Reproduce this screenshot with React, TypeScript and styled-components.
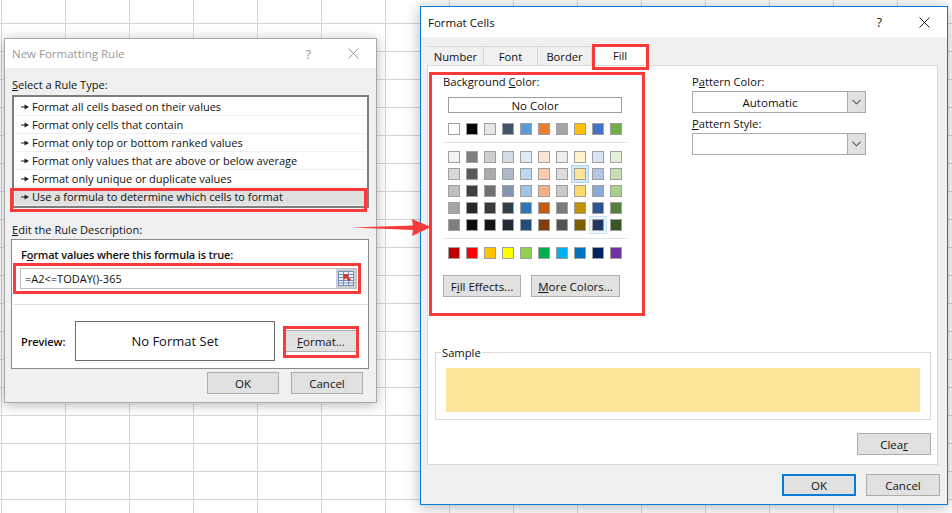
import styled, { createGlobalStyle } from "styled-components";

const themeRow = ["#ffffff", "#000000", "#e7e6e6", "#44546a", "#5b9bd5", "#ed7d31", "#a5a5a5", "#ffc000", "#4472c4", "#70ad47"];
const tintRows = [
  "#f2f2f2 #7f7f7f #d0cece #d6dce4 #deeaf6 #fbe5d5 #ededed #fff2cc #d9e2f3 #e2efd9",
  "#d8d8d8 #595959 #aeabab #adb9ca #bdd7ee #f7cbac #dbdbdb #ffe599 #b4c6e7 #c5e0b3",
  "#bfbfbf #3f3f3f #757070 #8496b0 #9dc3e6 #f4b183 #c9c9c9 #ffd966 #8eaadb #a8d08d",
  "#a5a5a5 #262626 #3a3838 #323f4f #2e75b5 #c55a11 #7b7b7b #bf9000 #2f5496 #538135",
  "#7f7f7f #0c0c0c #171616 #222a35 #1e4e79 #833c0b #525252 #7f6000 #1f3864 #375623",
].join(" ").split(" ");
const standardRow = ["#c00000", "#ff0000", "#ffc000", "#ffff00", "#92d050", "#00b050", "#00b0f0", "#0070c0", "#002060", "#7030a0"];

const rules = [
  "Format all cells based on their values",
  "Format only cells that contain",
  "Format only top or bottom ranked values",
  "Format only values that are above or below average",
  "Format only unique or duplicate values",
  "Use a formula to determine which cells to format",
];

function CloseIcon({ color }: { color: string }) {
  return (
    <svg width="11" height="11" viewBox="0 0 11 11">
      <path d="M0.5 0.5L10.5 10.5M10.5 0.5L0.5 10.5" stroke={color} strokeWidth="1" fill="none" />
    </svg>
  );
}

function Chevron() {
  return (
    <svg width="9" height="6" viewBox="0 0 9 6">
      <path d="M0.5 0.8L4.5 4.8L8.5 0.8" stroke="#555" strokeWidth="1.1" fill="none" />
    </svg>
  );
}

function RuleBullet() {
  return (
    <svg width="8" height="6" viewBox="0 0 8 6">
      <path d="M0 2.4H3.5V0.5L8 3L3.5 5.5V3.6H0Z" fill="#222" />
    </svg>
  );
}

function RangeIcon() {
  return (
    <svg width="16" height="15" viewBox="0 0 16 15">
      <rect x="0.5" y="0.5" width="15" height="14" fill="#eef3fa" stroke="#6f90c2" />
      <path d="M0.5 3.5H15.5M0.5 6.5H15.5M0.5 9.5H15.5M0.5 12H15.5M5.5 0.5V14.5M10.5 0.5V14.5" stroke="#6f90c2" strokeWidth="1" fill="none" />
      <path d="M5 3L11 3.5L9.6 5.4L13 8.5L11 10.5L8 7L6.2 8.8Z" fill="#d9342b" />
    </svg>
  );
}

function App() {
  return (
    <>
      <GlobalStyle />
      <Canvas>
        <LeftDialog>
          <TitleBar $height={29}>
            <TitleText $muted>New Formatting Rule</TitleText>
            <TitleButtons>
              <HelpMark $muted>?</HelpMark>
              <CloseIcon color="#999" />
            </TitleButtons>
          </TitleBar>
          <LeftBody>
            <SectionLabel>
              <u>S</u>elect a Rule Type:
            </SectionLabel>
            <RuleList>
              {rules.map((rule, i) => (
                <RuleRow key={rule} $selected={i === 5}>
                  <RuleBullet />
                  {rule}
                </RuleRow>
              ))}
            </RuleList>
            <EditLabel>
              <u>E</u>dit the Rule Description:
            </EditLabel>
            <EditBox>
              <BoldLabel>
                F<u>o</u>rmat values where this formula is true:
              </BoldLabel>
              <FormulaInput>
                <FormulaText>=A2&lt;=TODAY()-365</FormulaText>
                <RangeButton>
                  <RangeIcon />
                </RangeButton>
              </FormulaInput>
              <Divider />
              <PreviewRow>
                <PreviewLabel>Preview:</PreviewLabel>
                <PreviewBox>No Format Set</PreviewBox>
                <FormatButton>
                  <u>F</u>ormat...
                </FormatButton>
              </PreviewRow>
            </EditBox>
            <LeftFooter>
              <LeftButton>OK</LeftButton>
              <LeftButton>Cancel</LeftButton>
            </LeftFooter>
          </LeftBody>
        </LeftDialog>

        <RightDialog>
          <TitleBar $height={30}>
            <TitleText>Format Cells</TitleText>
            <TitleButtons>
              <HelpMark>?</HelpMark>
              <CloseIcon color="#222" />
            </TitleButtons>
          </TitleBar>
          <RightBody>
            <Tabs>
              <Tab $width={56}>Number</Tab>
              <Tab $width={54}>Font</Tab>
              <Tab $width={54}>Border</Tab>
              <Tab $width={57} $active>
                Fill
              </Tab>
            </Tabs>
            <Panel>
              <PanelColumns>
                <ColorColumn>
                  <FieldLabel>
                    Background <u>C</u>olor:
                  </FieldLabel>
                  <NoColor>No Color</NoColor>
                  <ThemeSwatches>
                    {themeRow.map((c) => (
                      <Swatch key={c} $color={c} />
                    ))}
                  </ThemeSwatches>
                  <SwatchRule />
                  <TintSwatches>
                    {tintRows.map((c, i) => (
                      <Swatch key={i} $color={c} $ring={i === 17 ? "strong" : i === 48 ? "soft" : undefined} />
                    ))}
                  </TintSwatches>
                  <SwatchRule />
                  <ThemeSwatches>
                    {standardRow.map((c) => (
                      <Swatch key={c} $color={c} />
                    ))}
                  </ThemeSwatches>
                  <ColorButtons>
                    <ColorButton $width={78}>
                      F<u>i</u>ll Effects...
                    </ColorButton>
                    <ColorButton $width={89}>
                      <u>M</u>ore Colors...
                    </ColorButton>
                  </ColorButtons>
                </ColorColumn>
                <PatternColumn>
                  <FieldLabel>
                    P<u>a</u>ttern Color:
                  </FieldLabel>
                  <SelectBox>
                    <SelectValue>Automatic</SelectValue>
                    <SelectArrow>
                      <Chevron />
                    </SelectArrow>
                  </SelectBox>
                  <PatternLabel>
                    <u>P</u>attern Style:
                  </PatternLabel>
                  <SelectBox>
                    <SelectValue />
                    <SelectArrow>
                      <Chevron />
                    </SelectArrow>
                  </SelectBox>
                </PatternColumn>
              </PanelColumns>
              <SampleGroup>
                <SampleLegend>Sample</SampleLegend>
                <SampleFill />
              </SampleGroup>
              <ClearRow>
                <ClearButton>
                  Clea<u>r</u>
                </ClearButton>
              </ClearRow>
            </Panel>
            <RightFooter>
              <DialogButton $primary>OK</DialogButton>
              <DialogButton>Cancel</DialogButton>
            </RightFooter>
          </RightBody>
        </RightDialog>

        <Highlight $x={10} $y={188} $w={357} $h={24} />
        <Highlight $x={13} $y={263} $w={348} $h={31} />
        <Highlight $x={283} $y={326} $w={76} $h={32} />
        <Highlight $x={592} $y={44} $w={57} $h={26} />
        <Highlight $x={429} $y={72} $w={216} $h={244} />
        <Arrow width="80" height="18" viewBox="0 0 80 18">
          <path d="M0 8.5L61 6.5L60 0L79 8L60 17L61 11Z" fill="#f73b3b" />
        </Arrow>
      </Canvas>
    </>
  );
}

const GlobalStyle = createGlobalStyle`
  html, body {
    margin: 0;
    padding: 0;
    overflow: hidden;
    background: #fff;
  }
  body {
    font-family: "Open Sans", "Noto Sans", sans-serif;
    font-size: 11.5px;
    color: #111;
  }
  u {
    text-underline-offset: 1px;
  }
`;

const Canvas = styled.div`
  position: relative;
  width: 952px;
  height: 513px;
  overflow: hidden;
  background-color: #fff;
  background-image: linear-gradient(#d6d6d6 1px, transparent 1px),
    linear-gradient(90deg, #d6d6d6 1px, transparent 1px);
  background-size: 100% 28px, 64px 100%;
  background-position: 0 23px, 1px 0;
`;

const LeftDialog = styled.div`
  position: absolute;
  left: 4px;
  top: 38px;
  width: 373px;
  height: 365px;
  box-sizing: border-box;
  display: flex;
  flex-direction: column;
  background: #f0f0f0;
  border: 1px solid #a9a9a9;
  box-shadow: 0 2px 12px rgba(0, 0, 0, 0.28);
`;

const RightDialog = styled.div`
  position: absolute;
  left: 420px;
  top: 6px;
  width: 528px;
  height: 499px;
  box-sizing: border-box;
  display: flex;
  flex-direction: column;
  background: #f0f0f0;
  border: 1px solid #0a7bd6;
  box-shadow: 0 2px 14px rgba(0, 0, 0, 0.3);
`;

const TitleBar = styled.div<{ $height: number }>`
  height: ${(p) => p.$height}px;
  flex: none;
  display: flex;
  align-items: center;
  justify-content: space-between;
  padding: 0 17px 0 7px;
  background: #fff;
`;

const TitleText = styled.div<{ $muted?: boolean }>`
  font-size: 11.5px;
  color: ${(p) => (p.$muted ? "#999" : "#111")};
`;

const TitleButtons = styled.div`
  display: flex;
  align-items: center;
  gap: 37px;
`;

const HelpMark = styled.span<{ $muted?: boolean }>`
  font-size: 13px;
  color: ${(p) => (p.$muted ? "#999" : "#222")};
`;

const LeftBody = styled.div`
  flex: 1;
  display: flex;
  flex-direction: column;
  padding: 0 7px 0 6px;
`;

const SectionLabel = styled.div`
  height: 16px;
  margin-top: 9px;
  padding-left: 1px;
  line-height: 16px;
  font-size: 11.1px;
`;

const RuleList = styled.div`
  height: 113px;
  box-sizing: border-box;
  margin-top: 2px;
  margin-left: 1px;
  padding: 1px;
  display: flex;
  flex-direction: column;
  background: #fff;
  border: 2px solid #7d7d7d;
`;

const RuleRow = styled.div<{ $selected?: boolean }>`
  height: 18px;
  flex: none;
  box-sizing: border-box;
  display: flex;
  align-items: center;
  gap: 3px;
  padding-left: 6px;
  font-size: 11px;
  background: ${(p) => (p.$selected ? "#e0e0e0" : "transparent")};
  border-bottom: 1px solid #efefef;
`;

const EditLabel = styled(SectionLabel)`
  margin-top: 14px;
`;

const EditBox = styled.div`
  height: 130px;
  box-sizing: border-box;
  margin-top: 1px;
  padding: 7px 0 0 0;
  background: #fff;
  border: 1px solid #8a8a8a;
`;

const BoldLabel = styled.div`
  height: 16px;
  line-height: 16px;
  padding-left: 9px;
  font-size: 11px;
  font-weight: 600;
  letter-spacing: -0.17px;
`;

const FormulaInput = styled.div`
  height: 21px;
  box-sizing: border-box;
  margin: 5px 11px 0 8px;
  display: flex;
  background: #fff;
  border: 1px solid #bdbdbd;
`;

const FormulaText = styled.div`
  flex: 1;
  line-height: 19px;
  padding-left: 4px;
  font-size: 11px;
`;

const RangeButton = styled.div`
  width: 20px;
  display: flex;
  align-items: center;
  justify-content: center;
  background: #cfcfcf;
`;

const Divider = styled.div`
  height: 1px;
  margin: 15px 0 0 1px;
  background: #dedede;
`;

const PreviewRow = styled.div`
  margin-top: 16px;
  display: flex;
  align-items: center;
  padding-left: 9px;
`;

const PreviewLabel = styled.div`
  width: 54px;
  font-size: 11px;
  font-weight: 600;
  letter-spacing: -0.1px;
`;

const PreviewBox = styled.div`
  width: 200px;
  height: 40px;
  box-sizing: border-box;
  display: flex;
  align-items: center;
  justify-content: center;
  font-size: 13px;
  border: 1px solid #6e6e6e;
`;

const ButtonBase = styled.div`
  display: flex;
  align-items: center;
  justify-content: center;
  box-sizing: border-box;
  background: #e1e1e1;
  border: 1px solid #adadad;
`;

const FormatButton = styled(ButtonBase)`
  width: 72px;
  height: 22px;
  margin-left: 10px;
`;

const LeftFooter = styled.div`
  margin-top: 3px;
  display: flex;
  justify-content: flex-end;
  gap: 12px;
  padding-right: 6px;
`;

const LeftButton = styled(ButtonBase)`
  width: 72px;
  height: 22px;
`;

const DialogButton = styled(ButtonBase)<{ $primary?: boolean }>`
  width: 74px;
  height: 22px;
  border: ${(p) => (p.$primary ? "2px solid #0a7bd6" : "1px solid #adadad")};
`;

const RightBody = styled.div`
  flex: 1;
  display: flex;
  flex-direction: column;
  padding: 9px 9px 0 6px;
`;

const Tabs = styled.div`
  height: 19px;
  flex: none;
  display: flex;
  padding-left: 1px;
  position: relative;
  z-index: 1;
  font-size: 11.2px;
`;

const Tab = styled.div<{ $width: number; $active?: boolean }>`
  width: ${(p) => p.$width}px;
  height: ${(p) => (p.$active ? 20 : 19)}px;
  margin-top: ${(p) => (p.$active ? -1 : 0)}px;
  box-sizing: border-box;
  display: flex;
  align-items: center;
  justify-content: center;
  background: ${(p) => (p.$active ? "#fff" : "#f0f0f0")};
  border-top: 1px solid #d9d9d9;
  border-right: 1px solid #d9d9d9;
`;

const Panel = styled.div`
  height: 400px;
  flex: none;
  box-sizing: border-box;
  display: flex;
  flex-direction: column;
  background: #fff;
  border: 1px solid #d9d9d9;
`;

const PanelColumns = styled.div`
  height: 278px;
  flex: none;
  display: flex;
  padding: 8px 0 0 15px;
  box-sizing: content-box;
`;

const ColorColumn = styled.div`
  width: 249px;
  flex: none;
`;

const PatternColumn = styled.div`
  width: 174px;
`;

const FieldLabel = styled.div`
  height: 16px;
  line-height: 16px;
  font-size: 11.2px;
`;

const PatternLabel = styled(FieldLabel)`
  margin-top: 3px;
`;

const NoColor = styled(ButtonBase)`
  width: 174px;
  height: 16px;
  margin: 7px 0 0 5px;
  background: #fff;
  border-color: #9e9e9e;
`;

const ThemeSwatches = styled.div`
  margin: 10px 0 0 5px;
  display: grid;
  grid-template-columns: repeat(10, 12px);
  column-gap: 6px;
`;

const TintSwatches = styled(ThemeSwatches)`
  margin-top: 8px;
  row-gap: 5px;
`;

const Swatch = styled.div<{ $color: string; $ring?: "strong" | "soft" }>`
  width: 12px;
  height: 12px;
  box-sizing: border-box;
  background: ${(p) => p.$color};
  border: 1px solid #a0a0a0;
  box-shadow: ${(p) =>
    p.$ring === "strong"
      ? "0 0 0 2px #d6eafb, 0 0 0 3px #a8d4f7"
      : p.$ring === "soft"
      ? "0 0 0 2px #eaf4fc, 0 0 0 3px #cce4f7"
      : "none"};
`;

const SwatchRule = styled.div`
  width: 184px;
  height: 1px;
  margin-top: 7px;
  background: #e2e2e2;

  & + ${ThemeSwatches} {
    margin-top: 8px;
  }
`;

const ColorButtons = styled.div`
  margin-top: 16px;
  display: flex;
  gap: 10px;
`;

const ColorButton = styled(ButtonBase)<{ $width: number }>`
  width: ${(p) => p.$width}px;
  height: 22px;
`;

const SelectBox = styled.div`
  width: 174px;
  height: 22px;
  box-sizing: border-box;
  margin-top: 1px;
  display: flex;
  background: #fff;
  border: 1px solid #a9a9a9;
`;

const SelectValue = styled.div`
  flex: 1;
  display: flex;
  align-items: center;
  justify-content: center;
`;

const SelectArrow = styled.div`
  width: 17px;
  display: flex;
  align-items: center;
  justify-content: center;
  background: #e1e1e1;
  border-left: 1px solid #a9a9a9;
`;

const SampleGroup = styled.div`
  position: relative;
  height: 68px;
  flex: none;
  box-sizing: border-box;
  margin: 0 6px 0 7px;
  padding: 15px 10px 0;
  border: 1px solid #d9d9d9;
`;

const SampleLegend = styled.div`
  position: absolute;
  left: 5px;
  top: -8px;
  padding: 0 1px;
  font-size: 11.2px;
  background: #fff;
`;

const SampleFill = styled.div`
  height: 44px;
  background: #ffe599;
`;

const ClearRow = styled.div`
  margin-top: 13px;
  padding-right: 6px;
  display: flex;
  justify-content: flex-end;
`;

const ClearButton = styled(ButtonBase)`
  width: 74px;
  height: 22px;
`;

const RightFooter = styled.div`
  margin-top: 9px;
  display: flex;
  justify-content: flex-end;
  gap: 10px;
  margin-right: -2px;
`;

const Highlight = styled.div<{ $x: number; $y: number; $w: number; $h: number }>`
  position: absolute;
  z-index: 2;
  left: ${(p) => p.$x}px;
  top: ${(p) => p.$y}px;
  width: ${(p) => p.$w}px;
  height: ${(p) => p.$h}px;
  box-sizing: border-box;
  border: 3px solid #f73b3b;
  pointer-events: none;
`;

const Arrow = styled.svg`
  position: absolute;
  z-index: 2;
  left: 352px;
  top: 219px;
`;

export default App;
